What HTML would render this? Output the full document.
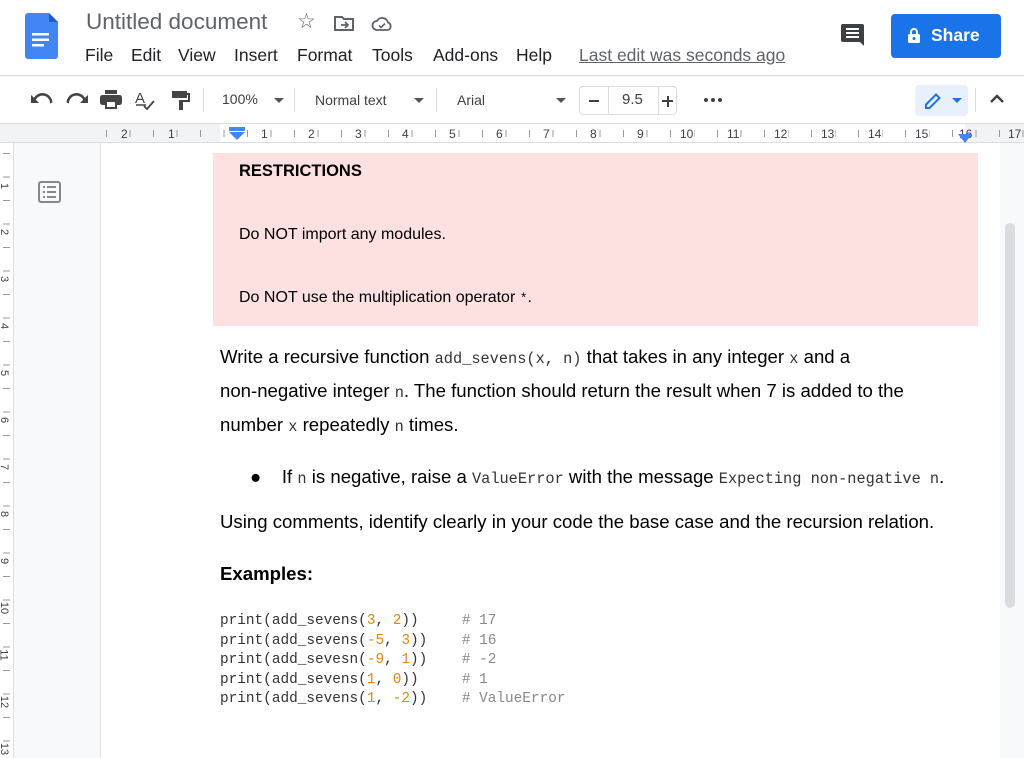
<!DOCTYPE html>
<html><head><meta charset="utf-8"><style>
*{margin:0;padding:0;box-sizing:border-box}
body{width:1024px;height:758px;overflow:hidden;background:#f8f9fa;font-family:"Liberation Sans",Arial,sans-serif;position:relative;color:#202124}
.a{position:absolute;white-space:nowrap}
.m{font-family:"Liberation Mono","Courier New",monospace}
.t{font-size:18.6px;color:#000}
.t .m{font-size:15.3px;color:#333}
.o{color:#e8850c}.g{color:#888}
.mn{position:absolute;top:45px;font-size:17.5px;color:#202124}
</style></head><body>
<!-- header -->
<div class="a" style="left:0;top:0;width:1024px;height:76px;background:#fff;border-bottom:1px solid #dadce0"></div>
<svg class="a" style="left:25px;top:13px" width="33" height="46" viewBox="0 0 33 46"><path d="M3 0h21l9 9v34a3 3 0 0 1-3 3H3a3 3 0 0 1-3-3V3a3 3 0 0 1 3-3z" fill="#4285f4"/><path d="M24 0l9 9h-9z" fill="#1a5fc9"/><rect x="7" y="20" width="17" height="2.5" fill="#fff"/><rect x="7" y="25.5" width="17" height="2.5" fill="#fff"/><rect x="7" y="31" width="12" height="2.5" fill="#fff"/></svg>
<div class="a" style="left:86px;top:9px;font-size:22.5px;color:#5f6368">Untitled document</div>
<div class="a" style="left:297px;top:9px;font-size:21px;color:#5f6368">☆</div>
<svg class="a" style="left:334px;top:15px" width="21" height="17" viewBox="0 0 21 17"><path d="M1 2h7l2 2h9v11H1z" fill="none" stroke="#5f6368" stroke-width="2"/><path d="M7 10h6M11 7l3 3-3 3" fill="none" stroke="#5f6368" stroke-width="1.8"/></svg>
<svg class="a" style="left:371px;top:16px" width="22" height="16" viewBox="0 0 22 16"><path d="M6 14a4.5 4.5 0 0 1 0-9 6 6 0 0 1 11 1.5 4 4 0 0 1 0 7.5z" fill="none" stroke="#5f6368" stroke-width="1.8"/><path d="M8 9.5l2 2 4-4" fill="none" stroke="#5f6368" stroke-width="1.6"/></svg>
<span class="mn" style="left:85px">File</span><span class="mn" style="left:131px">Edit</span><span class="mn" style="left:178px">View</span><span class="mn" style="left:234px">Insert</span><span class="mn" style="left:297px">Format</span><span class="mn" style="left:372px">Tools</span><span class="mn" style="left:433px">Add-ons</span><span class="mn" style="left:516px">Help</span>
<div class="a" style="left:579px;top:45px;font-size:17.5px;color:#5f6368;text-decoration:underline">Last edit was seconds ago</div>
<svg class="a" style="left:840px;top:23px" width="25" height="25" viewBox="0 0 25 25"><path d="M3 1h19a2 2 0 0 1 2 2v20l-4-4H3a2 2 0 0 1-2-2V3a2 2 0 0 1 2-2z" fill="#3c4043"/><path d="M6 6h13M6 10h13M6 14h13" stroke="#fff" stroke-width="2"/></svg>
<div class="a" style="left:891px;top:14px;width:110px;height:44px;background:#1a73e8;border-radius:4px;color:#fff;font-size:17.5px;font-weight:bold;padding:11px 0 0 40px">Share</div>
<svg class="a" style="left:908px;top:28px" width="12" height="15" viewBox="0 0 12 15"><rect x="0" y="6" width="12" height="9" rx="1.5" fill="#fff"/><path d="M3 6V4a3 3 0 0 1 6 0v2" fill="none" stroke="#fff" stroke-width="2"/><circle cx="6" cy="10.5" r="1.5" fill="#1a73e8"/></svg>
<!-- toolbar -->
<div class="a" style="left:0;top:77px;width:1024px;height:47px;background:#fff;border-bottom:1px solid #dadce0"></div>
<svg class="a" style="left:30px;top:91px" width="24" height="18" viewBox="0 0 24 18"><path d="M1 4v8h8l-3.2-3.2A7.5 7.5 0 0 1 20 12.5l2.5-1A10 10 0 0 0 4 6.8z" fill="#444"/></svg>
<svg class="a" style="left:65px;top:91px" width="24" height="18" viewBox="0 0 24 18"><path d="M23 4v8h-8l3.2-3.2A7.5 7.5 0 0 0 4 12.5l-2.5-1A10 10 0 0 1 20 6.8z" fill="#444"/></svg>
<svg class="a" style="left:100px;top:90px" width="22" height="20" viewBox="0 0 22 20" fill="#444"><rect x="5" y="0" width="12" height="4"/><rect x="0" y="5" width="22" height="10" rx="2.5"/><rect x="5" y="11" width="12" height="8"/><rect x="7" y="12" width="8" height="5" fill="#fff"/></svg>
<svg class="a" style="left:135px;top:89px" width="22" height="22" viewBox="0 0 22 22"><text x="0" y="14" font-size="15" font-family="Liberation Sans" fill="#444">A</text><path d="M1 16h10" stroke="#444" stroke-width="1.5"/><path d="M9 17l3 3 7-8" fill="none" stroke="#444" stroke-width="1.8"/></svg>
<svg class="a" style="left:172px;top:91px" width="19" height="19" viewBox="0 0 19 19" fill="#444"><rect x="0" y="0" width="15" height="7"/><path d="M14 3h3v7H9v2" fill="none" stroke="#444" stroke-width="2"/><rect x="7" y="9" width="4" height="10"/></svg>
<div class="a" style="left:203px;top:88px;width:1px;height:24px;background:#dadce0"></div>
<div class="a" style="left:222px;top:91px;font-size:14px;color:#3c4043">100%</div>
<div class="a" style="left:274px;top:98px;border:5px solid transparent;border-top-color:#555;border-bottom:0"></div>
<div class="a" style="left:294px;top:88px;width:1px;height:24px;background:#dadce0"></div>
<div class="a" style="left:315px;top:92px;font-size:14px;color:#3c4043">Normal text</div>
<div class="a" style="left:414px;top:98px;border:5px solid transparent;border-top-color:#555;border-bottom:0"></div>
<div class="a" style="left:436px;top:88px;width:1px;height:24px;background:#dadce0"></div>
<div class="a" style="left:457px;top:92px;font-size:14px;color:#3c4043">Arial</div>
<div class="a" style="left:556px;top:98px;border:5px solid transparent;border-top-color:#555;border-bottom:0"></div>
<div class="a" style="left:579px;top:86px;width:98px;height:29px;border:1px solid #dadce0;border-radius:4px"></div>
<div class="a" style="left:608px;top:86px;width:1px;height:29px;background:#dadce0"></div>
<div class="a" style="left:658px;top:86px;width:1px;height:29px;background:#dadce0"></div>
<div class="a" style="left:589px;top:100px;width:10px;height:2px;background:#3c4043"></div>
<div class="a" style="left:622px;top:91px;font-size:15px;color:#3c4043">9.5</div>
<div class="a" style="left:662px;top:100px;width:11px;height:2px;background:#3c4043"></div>
<div class="a" style="left:666.5px;top:95.5px;width:2px;height:11px;background:#3c4043"></div>
<svg class="a" style="left:703px;top:97px" width="20" height="6" viewBox="0 0 20 6" fill="#3c4043"><circle cx="3" cy="3" r="2"/><circle cx="10" cy="3" r="2"/><circle cx="17" cy="3" r="2"/></svg>
<div class="a" style="left:915px;top:85px;width:53px;height:31px;background:#e8f0fe;border-radius:4px"></div>
<svg class="a" style="left:924px;top:92px" width="18" height="18" viewBox="0 0 18 18"><path d="M2 16v-3.5L12 2.5l3.5 3.5L5.5 16z" fill="none" stroke="#1a73e8" stroke-width="2"/></svg>
<div class="a" style="left:952px;top:98px;border:5px solid transparent;border-top-color:#1a73e8;border-bottom:0"></div>
<div class="a" style="left:975px;top:88px;width:1px;height:24px;background:#dadce0"></div>
<svg class="a" style="left:989px;top:94px" width="16" height="10" viewBox="0 0 16 10"><path d="M2 8l6-6 6 6" fill="none" stroke="#3c4043" stroke-width="2.4"/></svg>
<!-- ruler -->
<div class="a" style="left:0;top:124px;width:1024px;height:19px;background:#f1f3f4;border-bottom:1px solid #dadce0"></div>
<div class="a" style="left:220px;top:124px;width:745px;height:18px;background:#fff"></div>
<div class="a" style="left:100px;top:130px;width:924px;height:7px;background:repeating-linear-gradient(90deg,transparent 0,transparent 6px,#999 6px,#999 7px,transparent 7px,transparent 23.5px)"></div>
<div class="a" style="left:0;top:127px;width:1024px;font-size:12px;color:#3c4043">
<span class="a" style="left:120px;background:#f1f3f4;padding:0 1px">2</span><span class="a" style="left:167px;background:#f1f3f4;padding:0 1px">1</span>
<span class="a" style="left:260px;background:#fff;padding:0 1px">1</span><span class="a" style="left:307px;background:#fff;padding:0 1px">2</span><span class="a" style="left:354px;background:#fff;padding:0 1px">3</span><span class="a" style="left:401px;background:#fff;padding:0 1px">4</span><span class="a" style="left:448px;background:#fff;padding:0 1px">5</span><span class="a" style="left:495px;background:#fff;padding:0 1px">6</span><span class="a" style="left:542px;background:#fff;padding:0 1px">7</span><span class="a" style="left:589px;background:#fff;padding:0 1px">8</span><span class="a" style="left:636px;background:#fff;padding:0 1px">9</span><span class="a" style="left:679px;background:#fff;padding:0 1px">10</span><span class="a" style="left:726px;background:#fff;padding:0 1px">11</span><span class="a" style="left:773px;background:#fff;padding:0 1px">12</span><span class="a" style="left:820px;background:#fff;padding:0 1px">13</span><span class="a" style="left:867px;background:#fff;padding:0 1px">14</span><span class="a" style="left:914px;background:#fff;padding:0 1px">15</span><span class="a" style="left:958px;padding:0 1px">16</span><span class="a" style="left:1007px;padding:0 1px">17</span></div>
<svg class="a" style="left:229px;top:127px" width="16" height="13" viewBox="0 0 16 13"><rect x="0" y="0" width="16" height="4" fill="#4285f4"/><path d="M0 5h16l-8 8z" fill="#4285f4"/></svg>
<svg class="a" style="left:958px;top:134px" width="14" height="9" viewBox="0 0 14 9"><path d="M0 0h14l-7 9z" fill="#4285f4"/></svg>
<!-- left vertical ruler -->
<div class="a" style="left:0;top:143px;width:13px;height:615px;background:#fff"></div>
<div class="a" style="left:13px;top:143px;width:1px;height:615px;background:#dadce0"></div>
<div class="a" style="left:3px;top:143px;width:7px;height:615px;background:repeating-linear-gradient(180deg,transparent 0,transparent 10px,#999 10px,#999 11px,transparent 11px,transparent 23.5px)"></div>
<div class="a" style="left:0;top:143px;font-size:11px;color:#3c4043">
<span class="a" style="left:1px;top:37px;transform:rotate(90deg);background:#fff">1</span><span class="a" style="left:1px;top:83px;transform:rotate(90deg);background:#fff">2</span><span class="a" style="left:1px;top:130px;transform:rotate(90deg);background:#fff">3</span><span class="a" style="left:1px;top:177px;transform:rotate(90deg);background:#fff">4</span><span class="a" style="left:1px;top:224px;transform:rotate(90deg);background:#fff">5</span><span class="a" style="left:1px;top:271px;transform:rotate(90deg);background:#fff">6</span><span class="a" style="left:1px;top:318px;transform:rotate(90deg);background:#fff">7</span><span class="a" style="left:1px;top:365px;transform:rotate(90deg);background:#fff">8</span><span class="a" style="left:1px;top:412px;transform:rotate(90deg);background:#fff">9</span><span class="a" style="left:-2px;top:459px;transform:rotate(90deg);background:#fff">10</span><span class="a" style="left:-2px;top:506px;transform:rotate(90deg);background:#fff">11</span><span class="a" style="left:-2px;top:553px;transform:rotate(90deg);background:#fff">12</span><span class="a" style="left:-2px;top:600px;transform:rotate(90deg);background:#fff">13</span></div>
<svg class="a" style="left:38px;top:181px" width="23" height="22" viewBox="0 0 23 22"><rect x="1" y="1" width="21" height="20" rx="2" fill="none" stroke="#888" stroke-width="2"/><path d="M5 6h2M5 11h2M5 16h2M9 6h9M9 11h9M9 16h9" stroke="#888" stroke-width="2"/></svg>
<!-- page -->
<div class="a" style="left:100px;top:143px;width:900px;height:615px;background:#fff;border-left:1px solid #e3e3e3"></div>
<div class="a" style="left:1005px;top:223px;width:10px;height:385px;background:#dadce0;border-radius:5px"></div>
<div class="a" style="left:213px;top:153px;width:765px;height:173px;background:#fde1e1"></div>
<div class="a" style="left:239px;top:162px;font-size:16.5px;font-weight:bold;color:#000">RESTRICTIONS</div>
<div class="a" style="left:239px;top:226px;font-size:16px;color:#000">Do NOT import any modules.</div>
<div class="a" style="left:239px;top:289px;font-size:16px;color:#000">Do NOT use the multiplication operator <span class="m" style="font-size:13px">*</span>.</div>
<div class="a t" style="left:220px;top:346px">Write a recursive function <span class="m">add_sevens(x, n)</span> that takes in any integer <span class="m">x</span> and a</div>
<div class="a t" style="left:220px;top:380px">non-negative integer <span class="m">n</span>. The function should return the result when 7 is added to the</div>
<div class="a t" style="left:220px;top:414px">number <span class="m">x</span> repeatedly <span class="m">n</span> times.</div>
<div class="a t" style="left:250px;top:466px">●&nbsp;&nbsp;&nbsp;&nbsp;If <span class="m">n</span> is negative, raise a <span class="m">ValueError</span> with the message <span class="m">Expecting non-negative n</span>.</div>
<div class="a t" style="left:220px;top:511px">Using comments, identify clearly in your code the base case and the recursion relation.</div>
<div class="a t" style="left:220px;top:563px;font-weight:bold">Examples:</div>
<div class="a m" style="left:220px;top:612px;font-size:14.4px;line-height:19.5px;color:#333;white-space:pre">print(add_sevens(<span class="o">3</span>, <span class="o">2</span>))     <span class="g"># 17</span>
print(add_sevens(<span class="o">-5</span>, <span class="o">3</span>))    <span class="g"># 16</span>
print(add_sevesn(<span class="o">-9</span>, <span class="o">1</span>))    <span class="g"># -2</span>
print(add_sevens(<span class="o">1</span>, <span class="o">0</span>))     <span class="g"># 1</span>
print(add_sevens(<span class="o">1</span>, <span class="o">-2</span>))    <span class="g"># ValueError</span></div>
</body></html>
